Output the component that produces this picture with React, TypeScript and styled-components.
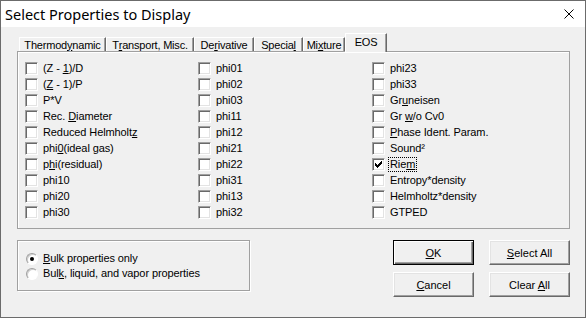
import React from 'react';
import styled, { createGlobalStyle, css } from 'styled-components';

const GlobalStyle = createGlobalStyle`
  html, body { margin: 0; padding: 0; background: #f0f0f0; }
  body { width: 586px; height: 318px; overflow: hidden; }
`;

const Window = styled.div`
  width: 586px;
  height: 318px;
  box-sizing: border-box;
  border: 1px solid #6b6b6b;
  background: #f0f0f0;
  display: flex;
  flex-direction: column;
  font-family: "Liberation Sans", Arial, sans-serif;
  font-size: 11px;
  color: #000;
`;

const TitleBar = styled.div`
  height: 26px;
  flex: none;
  background: #fff;
  display: flex;
  align-items: center;
  justify-content: space-between;
  padding: 0 11px 0 4px;
`;

const Title = styled.span`
  font-family: "Noto Sans", "Segoe UI", sans-serif;
  font-size: 14.5px;
  color: #000;
`;

const Body = styled.div`
  padding: 6px 15px 0 16px;
`;

const TabStrip = styled.div`
  display: flex;
  align-items: flex-end;
  height: 18px;
  padding-left: 2px;
  position: relative;
  z-index: 1;
`;

const Tab = styled.div<{ $active?: boolean; $w: number }>`
  width: ${(p) => p.$w}px;
  box-sizing: border-box;
  height: 14px;
  border-top: 1px solid #fff;
  border-left: 1px solid #fff;
  border-right: 1px solid #696969;
  box-shadow: inset -1px 0 #a0a0a0;
  background: #f0f0f0;
  display: flex;
  align-items: center;
  justify-content: center;
  line-height: 12px;
  letter-spacing: -0.2px;
  white-space: nowrap;
  ${(p) => p.$active && css`
    height: 19px;
    margin-bottom: -1px;
    padding-bottom: 3px;
  `}
`;

const Panel = styled.div`
  height: 178px;
  box-sizing: border-box;
  border: 1px solid #a0a0a0;
  box-shadow: inset 1px 1px #fff;
  padding: 10px 0 0 7px;
  display: grid;
  grid-template-columns: 173px 174px 1fr;
`;

const Column = styled.div`
  display: flex;
  flex-direction: column;
`;

const Row = styled.div`
  display: flex;
  align-items: flex-start;
  height: 16px;
`;

const Box = styled.span`
  width: 13px;
  height: 13px;
  flex: none;
  box-sizing: border-box;
  background: #fff;
  border: 1px solid;
  border-color: #a0a0a0 #fff #fff #a0a0a0;
  box-shadow: inset 1px 1px #696969, inset -1px -1px #e3e3e3;
  display: flex;
  align-items: center;
  justify-content: center;
`;

const Label = styled.span<{ $focus?: boolean }>`
  margin-left: 5px;
  line-height: 13px;
  letter-spacing: -0.1px;
  white-space: nowrap;
  ${(p) => p.$focus && css`
    outline: 1px dotted #000;
    outline-offset: 0;
    margin-left: 4px;
    padding: 0 1px;
  `}
`;

const Bottom = styled.div`
  display: flex;
  justify-content: space-between;
  align-items: flex-start;
  margin-top: 11px;
`;

const Group = styled.div`
  width: 233px;
  height: 51px;
  box-sizing: border-box;
  border: 1px solid #a0a0a0;
  box-shadow: inset 1px 1px #fff, 1px 1px #fff;
  padding: 10px 0 0 8px;
`;

const RadioRow = styled.div`
  display: flex;
  align-items: center;
  height: 15px;
`;

const Radio = styled.span<{ $on?: boolean }>`
  width: 12px;
  height: 12px;
  flex: none;
  box-sizing: border-box;
  border-radius: 50%;
  background: #fff;
  border: 1px solid;
  border-color: #a0a0a0 #fff #fff #a0a0a0;
  box-shadow: inset 1px 1px #cfcfcf;
  display: flex;
  align-items: center;
  justify-content: center;
  &::after {
    content: '';
    width: 4px;
    height: 4px;
    border-radius: 50%;
    background: ${(p) => (p.$on ? '#000' : 'transparent')};
  }
`;

const ButtonGrid = styled.div`
  display: grid;
  grid-template-columns: 81px 81px;
  column-gap: 15px;
  row-gap: 7px;
`;

const Button = styled.button<{ $default?: boolean }>`
  width: 81px;
  height: 25px;
  box-sizing: border-box;
  margin: 0;
  padding: 0;
  font: inherit;
  color: #000;
  background: #f0f0f0;
  border: 1px solid;
  border-color: #fff #696969 #696969 #fff;
  box-shadow: inset -1px -1px #a0a0a0, inset 1px 1px #e3e3e3;
  ${(p) => p.$default && css`
    border-color: #000;
    box-shadow: inset 1px 1px #fff, inset -1px -1px #696969, inset -2px -2px #a0a0a0;
  `}
`;

function Acc({ text }: { text: string }) {
  const i = text.indexOf('&');
  if (i < 0) return <>{text}</>;
  return (
    <>
      {text.slice(0, i)}
      <u>{text[i + 1]}</u>
      {text.slice(i + 2)}
    </>
  );
}

const tabs = [
  { t: 'Thermod&ynamic', w: 87 },
  { t: 'T&ransport, Misc.', w: 88 },
  { t: 'De&rivative', w: 60 },
  { t: 'Specia&l', w: 49 },
  { t: 'Mi&xture', w: 42 },
  { t: 'EOS', w: 42, active: true },
];

const columns: string[][] = [
  ['(Z - &1)/D', '(&Z - 1)/P', 'P*V', 'Rec. &Diameter', 'Reduced Helmholt&z',
    'phi&0(ideal gas)', 'p&hi(residual)', 'phi10', 'phi20', 'phi30'],
  ['phi01', 'phi02', 'phi03', 'phi11', 'phi12', 'phi21', 'phi22', 'phi31', 'phi13', 'phi32'],
  ['phi23', 'phi33', 'Gr&uneisen', 'Gr &w/o Cv0', '&Phase Ident. Param.', 'Sound²',
    'Rie&m', 'Entropy*density', 'Helmholtz*density', 'GTPED'],
];

const checked = 'Rie&m';

function Check() {
  return (
    <svg width="7" height="7" viewBox="0 0 7 7" shapeRendering="crispEdges">
      <path
        d="M6 0h1v3h-1v1h-1v1h-1v1h-1v1h-1v-1h-1v-1h-1v-3h1v1h1v1h1v-1h1v-1h1z"
        fill="#000"
      />
    </svg>
  );
}

function CloseIcon() {
  return (
    <svg width="10" height="10" viewBox="0 0 10 10">
      <path d="M0.5 0.5 L9.5 9.5 M9.5 0.5 L0.5 9.5" stroke="#000" strokeWidth="1" fill="none" />
    </svg>
  );
}

export default function App() {
  return (
    <>
      <GlobalStyle />
      <Window>
        <TitleBar>
          <Title>Select Properties to Display</Title>
          <CloseIcon />
        </TitleBar>
        <Body>
          <TabStrip>
            {tabs.map((tab) => (
              <Tab key={tab.t} $w={tab.w} $active={tab.active}>
                <Acc text={tab.t} />
              </Tab>
            ))}
          </TabStrip>
          <Panel>
            {columns.map((col, ci) => (
              <Column key={ci}>
                {col.map((item) => (
                  <Row key={item}>
                    <Box>{item === checked && <Check />}</Box>
                    <Label $focus={item === checked}>
                      <Acc text={item} />
                    </Label>
                  </Row>
                ))}
              </Column>
            ))}
          </Panel>
          <Bottom>
            <Group>
              <RadioRow>
                <Radio $on />
                <Label><Acc text="&Bulk properties only" /></Label>
              </RadioRow>
              <RadioRow>
                <Radio />
                <Label><Acc text="Bul&k, liquid, and vapor properties" /></Label>
              </RadioRow>
            </Group>
            <ButtonGrid>
              <Button $default type="button"><Acc text="&OK" /></Button>
              <Button type="button"><Acc text="&Select All" /></Button>
              <Button type="button"><Acc text="&Cancel" /></Button>
              <Button type="button"><Acc text="Clear &All" /></Button>
            </ButtonGrid>
          </Bottom>
        </Body>
      </Window>
    </>
  );
}
